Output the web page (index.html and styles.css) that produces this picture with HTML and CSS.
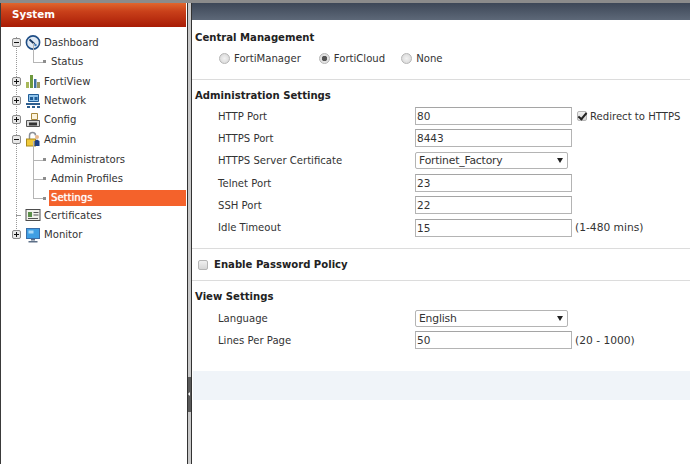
FILE: index.html
```html
<!DOCTYPE html>
<html lang="en">
<head>
<meta charset="utf-8">
<title>System Settings</title>
<link rel="stylesheet" href="styles.css">
</head>
<body>
<div class="app">
  <aside class="sidebar">
    <h1 class="panel-title">System</h1>
    <ul class="tree">
      <li class="node">
        <span class="exp minus"></span>
        <svg class="ico" viewBox="0 0 16 16"><circle cx="8" cy="7.500" r="6.600" fill="#dfe9f4" stroke="#1f4e86" stroke-width="1.600"/><path d="M4.500 4.500 9.500 9" stroke="#16365f" stroke-width="1.800"/><circle cx="10.500" cy="10" r="1.200" fill="#3d78b8"/></svg>
        <span>Dashboard</span>
      </li>
      <li class="node leaf last-leaf"><span class="dot"></span><span>Status</span></li>
      <li class="node">
        <span class="exp plus"></span>
        <svg class="ico" viewBox="0 0 16 16"><path d="M1 15V9h3v6z" fill="#a8b85a"/><path d="M5 15V2h3v13z" fill="#6f9a3e"/><path d="M9 15V6h2.500v9z" fill="#3f6f9f"/><path d="M12 15V9h3v6z" fill="#9a9a60"/></svg>
        <span>FortiView</span>
      </li>
      <li class="node">
        <span class="exp plus"></span>
        <svg class="ico" viewBox="0 0 16 16"><path d="M3.500 1.500h10v7h-10z" fill="#8fc3ea" stroke="#1f5c96"/><path d="M5 4h3v3H5zM9.500 4h3v3h-3z" fill="#1f5c96"/><path d="M1 10h14v2H1zM2 13h3v2H2zM7 13h3v2H7zM12 13h3v2h-3z" fill="#2f5f8f"/></svg>
        <span>Network</span>
      </li>
      <li class="node">
        <span class="exp plus"></span>
        <svg class="ico" viewBox="0 0 16 16"><path d="M6.500 1.500h6v6h-6z" fill="#fbf3dc" stroke="#a8883c"/><path d="M1.500 8.500h13v6h-13z" fill="#d8d8d8" stroke="#555"/><path d="M4 10.500h8v3H4z" fill="#333"/></svg>
        <span>Config</span>
      </li>
      <li class="node">
        <span class="exp minus"></span>
        <svg class="ico" viewBox="0 0 16 16"><path d="M4.500 8V4.500a3 3 0 0 1 6 0" fill="none" stroke="#8a8f96" stroke-width="1.500"/><rect x="1.500" y="8" width="9" height="7" fill="#f0c93a" stroke="#a88a1e"/><circle cx="12" cy="6" r="2" fill="#e8b98f"/><path d="M9.500 15v-5l2.500-1.500 2.500 1.500v5z" fill="#1c3f86"/></svg>
        <span>Admin</span>
      </li>
      <li class="node leaf first-child"><span class="dot"></span><span>Administrators</span></li>
      <li class="node leaf"><span class="dot"></span><span>Admin Profiles</span></li>
      <li class="node leaf last-leaf"><span class="dot"></span><span class="selected">Settings</span></li>
      <li class="node after-group">
        <span class="exp none"></span>
        <svg class="ico" viewBox="0 0 16 16"><rect x="1" y="2.500" width="14" height="11" fill="#f2f2ec" stroke="#4d4d4d"/><rect x="3" y="5" width="4" height="5" fill="#5c8f4a"/><path d="M8.500 5.500h5M8.500 8h5M3 11.500h10" stroke="#555"/></svg>
        <span>Certificates</span>
      </li>
      <li class="node">
        <span class="exp plus"></span>
        <svg class="ico" viewBox="0 0 16 16"><rect x="1.500" y="1.500" width="13" height="10" fill="#3f9fe4" stroke="#3a6ea8"/><path d="M3.500 3.500h5v3h-5z" fill="#a9d8f7"/><path d="M6 12h4v1.500H6zM3.500 14h9v1.500h-9z" fill="#5c6f87"/></svg>
        <span>Monitor</span>
      </li>
    </ul>
  </aside>
  <div class="splitter"><span class="handle"></span></div>
  <main class="content">
    <div class="topbar"></div>
    <form class="form">
      <section class="section central">
        <h2 class="heading">Central Management</h2>
        <div class="radios">
          <label class="radio"><input type="radio" name="cm"><span>FortiManager</span></label>
          <label class="radio"><input type="radio" name="cm" checked><span>FortiCloud</span></label>
          <label class="radio"><input type="radio" name="cm"><span>None</span></label>
        </div>
      </section>
      <section class="section admin">
        <h2 class="heading">Administration Settings</h2>
        <div class="rows">
          <div class="row"><label>HTTP Port</label><input class="field" value="80"><label class="check"><input type="checkbox" checked><span>Redirect to HTTPS</span></label></div>
          <div class="row"><label>HTTPS Port</label><input class="field" value="8443"></div>
          <div class="row"><label>HTTPS Server Certificate</label><div class="pick"><select><option>Fortinet_Factory</option></select></div></div>
          <div class="row"><label>Telnet Port</label><input class="field" value="23"></div>
          <div class="row"><label>SSH Port</label><input class="field" value="22"></div>
          <div class="row"><label>Idle Timeout</label><input class="field" value="15"><span class="hint">(1-480 mins)</span></div>
        </div>
      </section>
      <section class="section policy">
        <label class="policy-label"><input type="checkbox"><span>Enable Password Policy</span></label>
      </section>
      <section class="section view">
        <h2 class="heading">View Settings</h2>
        <div class="rows">
          <div class="row"><label>Language</label><div class="pick"><select><option>English</option></select></div></div>
          <div class="row"><label>Lines Per Page</label><input class="field" value="50"><span class="hint">(20 - 1000)</span></div>
        </div>
      </section>
      <div class="band"></div>
    </form>
  </main>
</div>
</body>
</html>
```

FILE: styles.css
```css
* { box-sizing: border-box; }
html, body { margin: 0; padding: 0; height: 100%; }
body {
  font-family: "DejaVu Sans", sans-serif;
  font-size: 10.100px;
  color: #333;
  background: #fff;
  overflow: hidden;
}
.app {
  display: flex;
  height: 464px;
  border-top: 3px solid #8b8b8b;
}

/* Sidebar */
.sidebar {
  position: relative;
  width: 187px;
  flex: none;
  border-left: 1px solid #3a3a3a;
  background: #fff;
}
.panel-title {
  margin: 0 1px 0 0;
  height: 24px;
  line-height: 23px;
  padding-left: 11px;
  font-size: 10.300px;
  font-weight: bold;
  color: #fff;
  background: linear-gradient(#e0662e 0%, #c9401a 35%, #a81c06 100%);
}
.tree {
  position: relative;
  list-style: none;
  margin: 0;
  padding: 6px 0 0;
}
.tree::before {
  content: "";
  position: absolute;
  left: 15px;
  top: 10px;
  height: 196px;
  border-left: 1px dotted #999;
}
.node {
  position: relative;
  display: flex;
  align-items: center;
  height: 19.300px;
  padding-left: 11px;
  white-space: nowrap;
}
.first-child { margin-top: 1px; }
.after-group { margin-top: -2px; }
.exp {
  position: relative;
  z-index: 1;
  width: 9px;
  height: 9px;
  flex: none;
  margin-right: 4px;
  border: 1px solid #8a8a8a;
  border-radius: 2px;
  background: #e8e8e8;
}
.exp.plus::before, .exp.minus::before {
  content: "";
  position: absolute;
  left: 1px;
  top: 3px;
  width: 5px;
  height: 1px;
  background: #111;
}
.exp.plus::after {
  content: "";
  position: absolute;
  left: 3px;
  top: 1px;
  width: 1px;
  height: 5px;
  background: #111;
}
.exp.none {
  border: 0;
  border-bottom: 1px solid #999;
  border-radius: 0;
  background: none;
  height: 1px;
  margin-left: 4px;
  width: 5px;
}
.ico {
  width: 16px;
  height: 16px;
  flex: none;
  margin-right: 3px;
}
.leaf { padding-left: 32px; }
.leaf::before {
  content: "";
  position: absolute;
  left: 32px;
  top: -9px;
  height: 19px;
  width: 9px;
  border-left: 1px solid #b5b5b5;
  border-bottom: 1px solid #b5b5b5;
}
.dot {
  width: 3px;
  height: 3px;
  flex: none;
  margin-left: 10px;
  margin-right: 5px;
  background: #8d8d8d;
}
.selected {
  flex: 1;
  margin: 0 1px 0 -2px;
  padding-left: 2px;
  height: 16px;
  line-height: 16px;
  color: #fff;
  text-shadow: 0 0 1px #fff;
  background: #f4622b;
}

/* Splitter */
.splitter {
  position: relative;
  width: 5px;
  flex: none;
  background: #c9c9c9;
  border-left: 1px solid #333;
  border-right: 1px solid #333;
}
.handle {
  position: absolute;
  left: 0;
  top: 374px;
  width: 3px;
  height: 35px;
  background: #5a5a5a;
}
.handle::after {
  content: "";
  position: absolute;
  left: 0;
  top: 15px;
  border-top: 2px solid transparent;
  border-bottom: 2px solid transparent;
  border-right: 2px solid #fff;
}

/* Content */
.content {
  flex: 1;
  min-width: 0;
  background: #fff;
}
.topbar {
  height: 17px;
  background: linear-gradient(#3d4757, #5d6878);
}
.form { display: block; }
.section { border-bottom: 1px solid #dcdcdc; }
.heading {
  margin: 0;
  padding-left: 3px;
  font-size: 10.100px;
  line-height: 14px;
  font-weight: bold;
  color: #222;
}
.central { height: 60px; padding-top: 11px; }
.radios {
  display: flex;
  padding-left: 27px;
  margin-top: 8px;
}
.radio {
  display: flex;
  align-items: center;
  gap: 4px;
  margin-right: 18px;
}
.radio:nth-child(2) { margin-right: 16px; }
input[type="radio"] {
  appearance: none;
  margin: 0;
  width: 11px;
  height: 11px;
  border: 1px solid #b5b5b5;
  border-radius: 50%;
  background: radial-gradient(#f2f2f2, #d4d4d4);
}
input[type="radio"]:checked {
  background: radial-gradient(#555 0 2.500px, #e2e2e2 3px);
}
.admin { height: 169px; padding-top: 9px; }
.rows { padding-left: 26px; margin-top: 2px; }
.view .rows { margin-top: 3px; }
.row {
  display: flex;
  align-items: center;
  height: 22.300px;
  white-space: nowrap;
}
.row > label:first-child { width: 197px; flex: none; }
.field {
  width: 157px;
  height: 18px;
  padding: 0 1px;
  flex: none;
  border: 1px solid #b4b4b4;
  border-top-color: #a5a5a5;
  background: #fff;
  font: 10.500px "DejaVu Sans", sans-serif;
  color: #333;
  outline: 0;
}
.pick {
  position: relative;
  width: 153px;
  height: 17px;
  flex: none;
}
.pick::after {
  content: "";
  position: absolute;
  right: 5px;
  top: 6px;
  border-left: 3px solid transparent;
  border-right: 3px solid transparent;
  border-top: 5px solid #222;
}
.pick select {
  appearance: none;
  width: 100%;
  height: 100%;
  padding: 0 0 0 3px;
  border: 1px solid #b4b4b4;
  border-radius: 2px;
  background: #fff;
  font-family: "DejaVu Sans", sans-serif;
  font-size: 10.800px;
  letter-spacing: -0.200px;
  color: #333;
}
.check {
  display: flex;
  align-items: center;
  gap: 3px;
  margin-left: 5px;
  font-size: 10.100px;
}
.check input, .policy-label input {
  appearance: none;
  position: relative;
  margin: 0;
  border: 1px solid #b5b5b5;
  border-radius: 2px;
  background: linear-gradient(#f0f0f0, #d6d6d6);
}
.check input { width: 10px; height: 10px; }
.check input:checked::after {
  content: "";
  position: absolute;
  left: 2px;
  top: -1px;
  width: 3px;
  height: 7px;
  border: solid #222;
  border-width: 0 2px 2px 0;
  transform: rotate(40deg);
}
.hint { margin-left: 3px; font-size: 10.700px; }
.policy {
  height: 32px;
  display: flex;
  align-items: center;
  padding-left: 6px;
}
.policy-label {
  display: flex;
  align-items: center;
  gap: 6px;
  font-weight: bold;
  color: #222;
}
.policy-label input { width: 10px; height: 10px; }
.view { border-bottom: 0; height: 90px; padding-top: 9px; }
.band {
  height: 29px;
  margin-left: 1px;
  background: #f0f4f9;
}
```
